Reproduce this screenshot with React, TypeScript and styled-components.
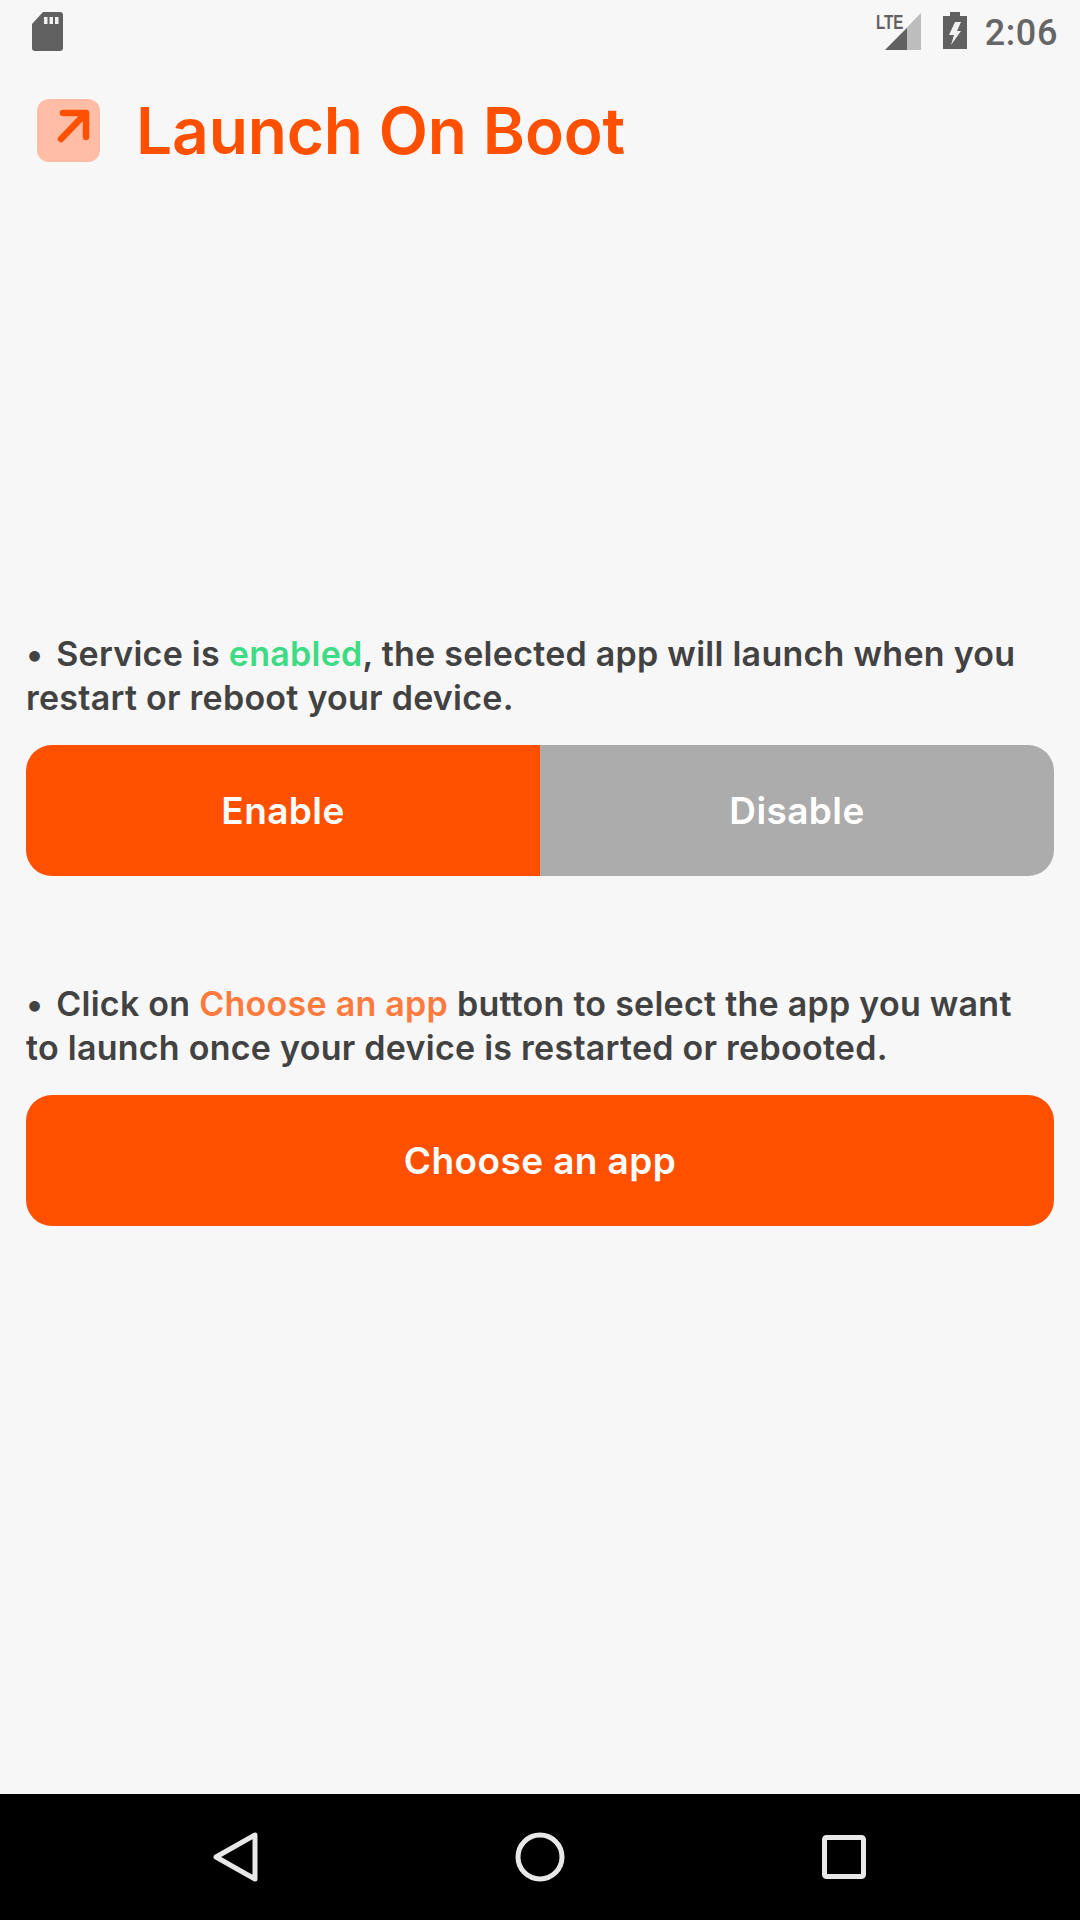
import { createGlobalStyle, styled } from "styled-components";

const GlobalStyle = createGlobalStyle`
  html, body {
    margin: 0;
    padding: 0;
    background: #f7f7f7;
  }
`;

const Screen = styled.div`
  width: 1080px;
  height: 1920px;
  display: flex;
  flex-direction: column;
  background: #f7f7f7;
  font-family: Inter, "Liberation Sans", sans-serif;
  overflow: hidden;
`;

// Status bar
const StatusBar = styled.div`
  height: 63px;
  display: flex;
  align-items: flex-start;
  justify-content: space-between;
  padding: 12px 22px 0 32px;
  box-sizing: border-box;
`;

const StatusRight = styled.div`
  display: flex;
  align-items: flex-start;
`;

const Clock = styled.span`
  font-family: Roboto, sans-serif;
  font-size: 36px;
  font-weight: 500;
  line-height: 41px;
  letter-spacing: 0.6px;
  color: #666;
  margin-left: 18px;
  margin-top: 1px;
`;

const Glyph = styled.svg`
  display: block;
  flex-shrink: 0;
`;

const LteLabel = styled.span`
  width: 24px;
  margin-top: 1px;
  margin-right: -15px;
  font-family: "Liberation Sans", sans-serif;
  font-size: 21px;
  font-weight: 700;
  line-height: 17px;
  color: #616161;
  transform: scaleX(0.72);
  transform-origin: left top;
  white-space: nowrap;
  position: relative;
  z-index: 1;
`;

// Header
const Header = styled.header`
  display: flex;
  align-items: center;
  padding: 36px 0 0 37px;
  gap: 36px;
`;

const Title = styled.h1`
  margin: 0;
  font-size: 64px;
  font-weight: 600;
  line-height: 63px;
  letter-spacing: -0.15px;
  color: #ff5000;
`;

// Body
const Content = styled.main`
  flex: 1;
  padding: 0 26px;
  display: flex;
  flex-direction: column;
`;

const Note = styled.p<{ $top: number }>`
  margin: ${(p) => p.$top}px 0 0;
  font-size: 34px;
  font-weight: 600;
  line-height: 44px;
  letter-spacing: 0.26px;
  color: #424242;
`;

const Bullet = styled.span`
  margin-right: 4px;
`;

const Accent = styled.span<{ $color: string }>`
  color: ${(p) => p.$color};
`;

const ButtonRow = styled.div`
  display: flex;
  height: 131px;
  margin-top: 25px;
  border-radius: 26px;
  overflow: hidden;
`;

const ActionButton = styled.button<{ $bg: string }>`
  flex: 1;
  border: 0;
  padding: 0;
  background: ${(p) => p.$bg};
  color: #fff;
  font-family: inherit;
  font-size: 37px;
  font-weight: 600;
  letter-spacing: 0.4px;
`;

// Nav bar
const NavBar = styled.nav`
  height: 126px;
  background: #000;
  display: flex;
  align-items: center;
  justify-content: center;
  gap: 254px;
`;

export default function App() {
  return (
    <Screen>
      <GlobalStyle />
      <StatusBar>
        <Glyph width="31" height="39" viewBox="0 0 31 39">
          <path
            d="M11 0H28a3 3 0 0 1 3 3V36a3 3 0 0 1-3 3H3a3 3 0 0 1-3-3V12Z"
            fill="#616161"
          />
          <path d="M12 5h3.5v7h-3.5zM17.5 5h3.5v7h-3.5zM23 5h3.5v7h-3.5z" fill="#f2f2f2" />
        </Glyph>
        <StatusRight>
          <LteLabel>LTE</LteLabel>
          <Glyph width="36" height="37" viewBox="0 0 36 37" style={{ marginTop: 1 }}>
            <path d="M36 0V37H0Z" fill="#bdbdbd" />
            <path d="M22 15V37H0Z" fill="#616161" />
          </Glyph>
          <Glyph width="24" height="37" viewBox="0 0 24 37" style={{ marginLeft: 22 }}>
            <path d="M7 0H17V4H24V37H0V4H7Z" fill="#616161" />
            <path d="M12 10H18L14 19H18L8 33L11 23H6Z" fill="#f2f2f2" />
          </Glyph>
          <Clock>2:06</Clock>
        </StatusRight>
      </StatusBar>
      <Header>
        <Glyph width="63" height="63" viewBox="0 0 63 63">
          <rect width="63" height="63" rx="12" fill="#ffbda6" />
          <path
            d="M26 14H49V38M49 14L24 40"
            fill="none"
            stroke="#ff5000"
            strokeWidth="6.5"
            strokeLinecap="round"
            strokeLinejoin="round"
          />
        </Glyph>
        <Title>Launch On Boot</Title>
      </Header>
      <Content>
        <Note $top={470}>
          <Bullet>•</Bullet> Service is <Accent $color="#3ddc84">enabled</Accent>, the selected app will launch when you
          <br />
          restart or reboot your device.
        </Note>
        <ButtonRow>
          <ActionButton $bg="#ff5000">Enable</ActionButton>
          <ActionButton $bg="#acacac">Disable</ActionButton>
        </ButtonRow>
        <Note $top={106}>
          <Bullet>•</Bullet> Click on <Accent $color="#ff7a3d">Choose an app</Accent> button to select the app you want
          <br />
          to launch once your device is restarted or rebooted.
        </Note>
        <ButtonRow>
          <ActionButton $bg="#ff5000">Choose an app</ActionButton>
        </ButtonRow>
      </Content>
      <NavBar>
        <Glyph width="50" height="50" viewBox="0 0 50 50">
          <path
            d="M44 3V47L5 25Z"
            fill="none"
            stroke="#e8e8e8"
            strokeWidth="5"
            strokeLinejoin="round"
          />
        </Glyph>
        <Glyph width="50" height="50" viewBox="0 0 50 50">
          <circle cx="25" cy="25" r="22" fill="none" stroke="#e8e8e8" strokeWidth="5" />
        </Glyph>
        <Glyph width="50" height="50" viewBox="0 0 50 50">
          <rect x="5.5" y="5.5" width="39" height="39" rx="2" fill="none" stroke="#e8e8e8" strokeWidth="5" />
        </Glyph>
      </NavBar>
    </Screen>
  );
}
